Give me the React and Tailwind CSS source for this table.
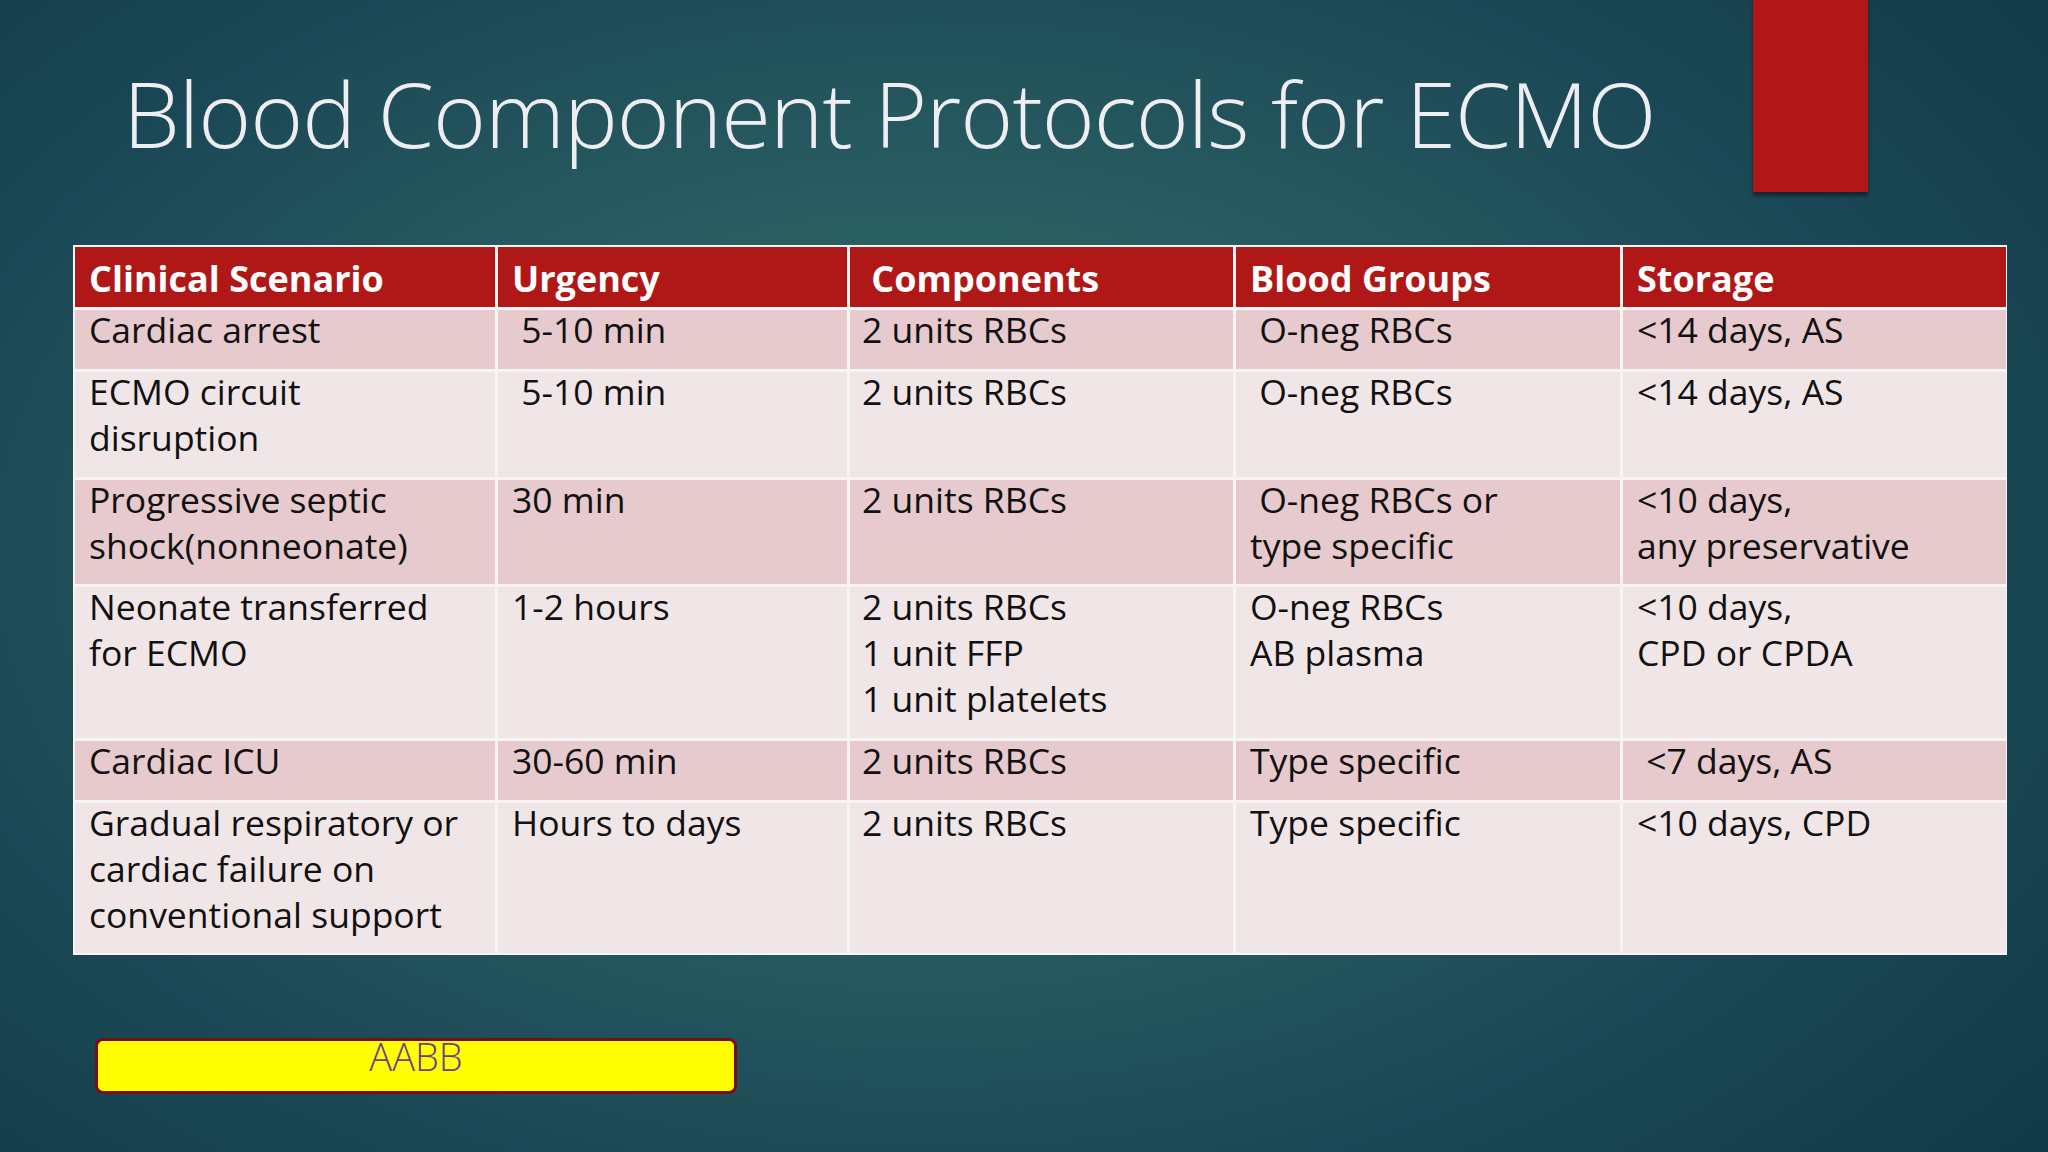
import React from "react";

const rows = [
  {
    tone: "bg-[#e6cacd]",
    cells: [["Cardiac arrest"], ["\u00a05-10 min"], ["2 units RBCs"], ["\u00a0O-neg RBCs"], ["<14 days, AS"]],
  },
  {
    tone: "bg-[#f1e6e7]",
    cells: [["ECMO circuit", "disruption"], ["\u00a05-10 min"], ["2 units RBCs"], ["\u00a0O-neg RBCs"], ["<14 days, AS"]],
  },
  {
    tone: "bg-[#e6cacd]",
    cells: [
      ["Progressive septic", "shock(nonneonate)"],
      ["30 min"],
      ["2 units RBCs"],
      ["\u00a0O-neg RBCs or", "type specific"],
      ["<10 days,", "any preservative"],
    ],
  },
  {
    tone: "bg-[#f1e6e7]",
    cells: [
      ["Neonate transferred", "for ECMO"],
      ["1-2 hours"],
      ["2 units RBCs", "1 unit FFP", "1 unit platelets"],
      ["O-neg RBCs", "AB plasma"],
      ["<10 days,", "CPD or CPDA"],
    ],
  },
  {
    tone: "bg-[#e6cacd]",
    cells: [["Cardiac ICU"], ["30-60 min"], ["2 units RBCs"], ["Type specific"], ["\u00a0<7 days, AS"]],
  },
  {
    tone: "bg-[#f1e6e7]",
    cells: [
      ["Gradual respiratory or", "cardiac failure on", "conventional support"],
      ["Hours to days"],
      ["2 units RBCs"],
      ["Type specific"],
      ["<10 days, CPD"],
    ],
  },
];

const headers = ["Clinical Scenario", "Urgency", "\u00a0Components", "Blood Groups", "Storage"];
const pads = ["pl-[14px]", "pl-[14px]", "pl-[12px]", "pl-[14px]", "pl-[14px]"];

export default function App() {
  return (
    <div
      className="w-[2048px] h-[1152px] overflow-hidden bg-[radial-gradient(ellipse_70%_80%_at_45%_48%,#3a7469_0%,#2a5f62_35%,#1b4856_70%,#133a48_100%)]"
      style={{ fontFamily: '"Open Sans", "Noto Sans", sans-serif' }}
    >
      <div className="flex items-start h-[192px]">
        <h1 className="pl-[123px] pt-[58px] text-[90.5px] font-light leading-[110px] text-[#eeeef2] tracking-[-1px] whitespace-nowrap">
          Blood Component Protocols for ECMO
        </h1>
        <div className="ml-auto mr-[180px] w-[115px] h-[192px] bg-[#b01716] shadow-[0_4px_3px_rgba(10,20,30,0.6)]" />
      </div>

      <div className="pl-[73px] mt-[53px]">
        <div className="w-[1934px] grid grid-cols-[420px_349px_383px_384px_383px] grid-rows-[60px_59px_105px_104px_151px_59px_150px] gap-[3px] bg-[#f7f4f4] p-[2px] text-[35.5px] leading-[46px] text-[#111]">
          {headers.map((h, i) => (
            <div key={h} className={`bg-[#b01817] ${pads[i]} font-bold text-white text-[36px] leading-[50px] pt-[7px]`}>
              {h}
            </div>
          ))}
          {rows.map((r, ri) =>
            r.cells.map((lines, ci) => (
              <div key={ri + "-" + ci} className={`${r.tone} ${pads[ci]}`}>
                <div className="-mt-[4px]">
                  {lines.map((l) => (
                    <div key={l} className="whitespace-nowrap">{l}</div>
                  ))}
                </div>
              </div>
            ))
          )}
        </div>
      </div>

      <div className="pl-[95px] mt-[83px]">
        <div className="w-[642px] h-[56px] bg-[#ffff00] border-[3px] border-[#7a0e0e] rounded-[8px] flex justify-center">
          <span className="text-[38px] leading-[40px] font-light text-[#6b3f8c] -mt-[5px]">AABB</span>
        </div>
      </div>
    </div>
  );
}
